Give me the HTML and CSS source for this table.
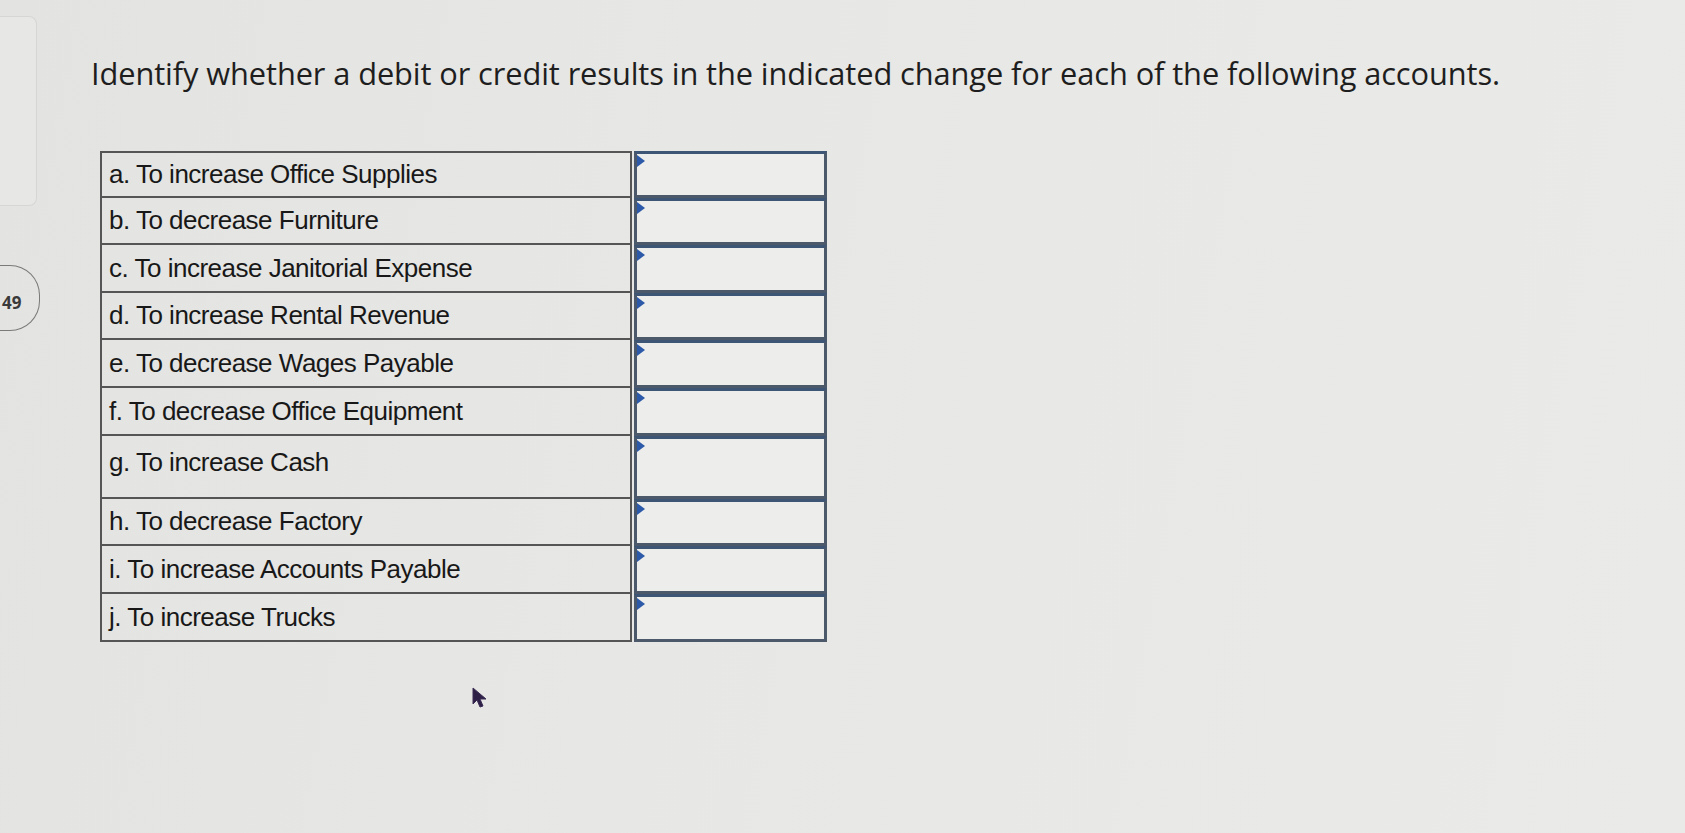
FILE: index.html
```html
<!DOCTYPE html>
<html>
<head>
<meta charset="utf-8">
<link rel="stylesheet" href="styles.css">
</head>
<body>
<div class="page">
  <div class="side">
    <div class="side-card"></div>
    <div class="qnum">49</div>
  </div>
  <main class="content">
    <h1 class="prompt">Identify whether a debit or credit results in the indicated change for each of the following accounts.</h1>
    <div class="grid">
      <div class="label first">a. To increase Office Supplies</div><div class="answer"><div class="box"><span class="tri"></span></div></div>
      <div class="label">b. To decrease Furniture</div><div class="answer"><div class="box"><span class="tri"></span></div></div>
      <div class="label">c. To increase Janitorial Expense</div><div class="answer"><div class="box"><span class="tri"></span></div></div>
      <div class="label">d. To increase Rental Revenue</div><div class="answer"><div class="box"><span class="tri"></span></div></div>
      <div class="label">e. To decrease Wages Payable</div><div class="answer"><div class="box"><span class="tri"></span></div></div>
      <div class="label">f. To decrease Office Equipment</div><div class="answer"><div class="box"><span class="tri"></span></div></div>
      <div class="label tall">g. To increase Cash</div><div class="answer"><div class="box"><span class="tri"></span></div></div>
      <div class="label">h. To decrease Factory</div><div class="answer"><div class="box"><span class="tri"></span></div></div>
      <div class="label">i. To increase Accounts Payable</div><div class="answer"><div class="box"><span class="tri"></span></div></div>
      <div class="label">j. To increase Trucks</div><div class="answer"><div class="box"><span class="tri"></span></div></div>
    </div>
  </main>
  <svg class="cursor" width="16" height="22" viewBox="0 0 16 22"><path d="M1 1 L1 17 L5 13 L8 20 L11 19 L8 12 L14 12 Z" fill="#2e1f47" stroke="#3c2d55" stroke-width="1"/></svg>
</div>
</body>
</html>
```
FILE: styles.css
```css
html, body {
  margin: 0;
  padding: 0;
}
body {
  width: 1685px;
  height: 833px;
  overflow: hidden;
  background: linear-gradient(100deg, #e3e3e1 0%, #e7e7e5 40%, #eaeae8 100%);
  font-family: "Liberation Sans", Arial, sans-serif;
  color: #222;
}
.page {
  position: relative;
  display: flex;
  height: 833px;
}
.side {
  width: 42px;
  flex: none;
  display: flex;
  flex-direction: column;
}
.side-card {
  margin-top: 16px;
  height: 188px;
  width: 36px;
  border: 1px solid #d6d6d4;
  border-left: none;
  border-radius: 0 8px 8px 0;
  background: #e7e7e5;
}
.qnum {
  margin-top: 59px;
  height: 66px;
  width: 40px;
  border: 1.5px solid #7a7a78;
  border-left: none;
  border-radius: 0 30px 30px 0;
  display: flex;
  align-items: center;
  font-family: "Open Sans", sans-serif;
  font-weight: 700;
  font-size: 17px;
  color: #3a3a3a;
  box-sizing: border-box;
  padding-left: 2px;
  padding-top: 8px;
}
.content {
  padding-left: 49px;
  padding-top: 52px;
}
.prompt {
  margin: 0;
  font-family: "Open Sans", sans-serif;
  font-weight: 400;
  font-size: 30.8px;
  letter-spacing: -0.1px;
  color: #1e1e1e;
  white-space: nowrap;
}
.grid {
  margin-top: 57px;
  margin-left: 9px;
  display: grid;
  grid-template-columns: 532px 195px;
  grid-template-rows: 47px 47px 48px 47px 48px 48px 63px 47px 48px 48px;
  width: 727px;
}
.label {
  border-left: 2px solid #555;
  border-right: 2px solid #555;
  border-bottom: 2px solid #555;
  display: flex;
  align-items: center;
  padding-left: 7px;
  font-size: 26px;
  letter-spacing: -0.5px;
  color: #181818;
}
.label.first {
  border-top: 2px solid #555;
}
.label.tall {
  padding-bottom: 8px;
}
.answer {
  padding-left: 2px;
  display: flex;
}
.box {
  position: relative;
  flex: 1;
  border: 3px solid #4b596b;
  border-top: 3px solid #3d5676;
  background: #ededeb;
}
.tri {
  position: absolute;
  left: 0;
  top: 1px;
  width: 0;
  height: 0;
  border-top: 6px solid transparent;
  border-bottom: 6px solid transparent;
  border-left: 8px solid #2d5aa8;
}
.cursor {
  position: absolute;
  left: 472px;
  top: 687px;
}
```
